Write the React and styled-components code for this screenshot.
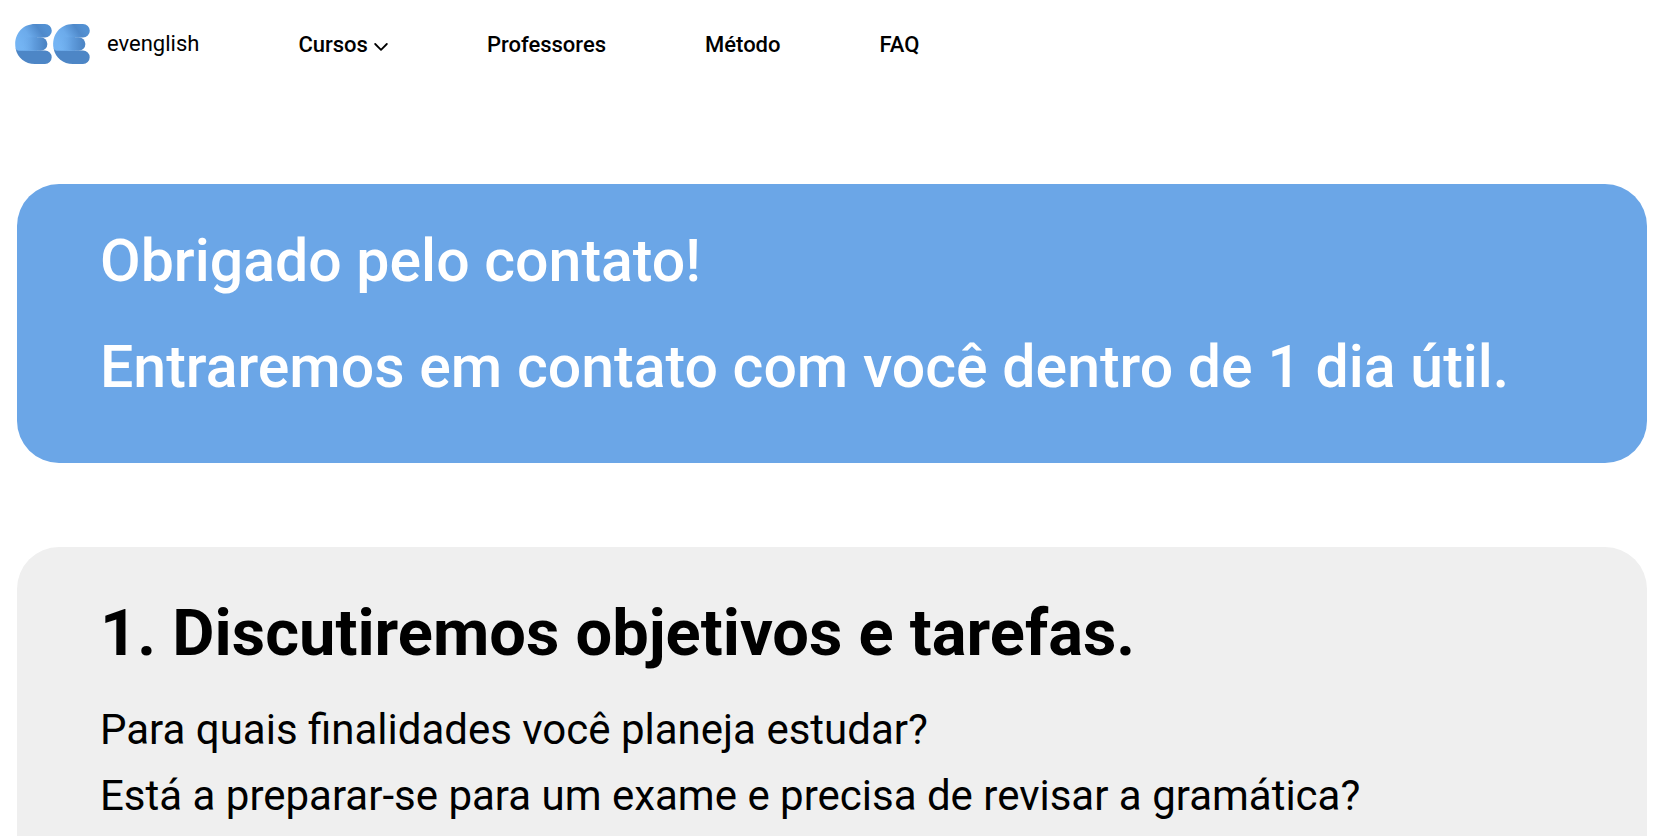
import React from 'react';
import styled, { createGlobalStyle } from 'styled-components';

const Colors = {
  BLACK: '#000',
  WHITE: '#fff',
  BLUE: '#6ba6e7',
  GREY: '#efefef',
};

const GlobalStyle = createGlobalStyle`
  body {
    background-color: ${Colors.WHITE};
    color: ${Colors.BLACK};
    font-family: Roboto, 'Liberation Sans', sans-serif;
    margin: 0;
  }
`;

const Header = styled.header`
  align-items: center;
  display: flex;
  gap: 99px;
  height: 88px;
  padding: 0 15px;
`;

const Brand = styled.a`
  align-items: center;
  color: ${Colors.BLACK};
  display: flex;
  font-size: 22px;
  gap: 17px;
  line-height: 26px;
  text-decoration: none;
`;

const Nav = styled.nav`
  align-items: center;
  display: flex;
  gap: 99px;
  padding-top: 2px;
`;

const NavLink = styled.a`
  color: ${Colors.BLACK};
  font-size: 22px;
  font-weight: 500;
  line-height: 26px;
  text-decoration: none;
`;

const NavButton = styled.button`
  align-items: center;
  background: none;
  border: 0;
  color: ${Colors.BLACK};
  cursor: pointer;
  display: flex;
  font-family: inherit;
  font-size: 22px;
  font-weight: 500;
  gap: 6px;
  line-height: 26px;
  padding: 0;
`;

const Main = styled.main`
  display: flex;
  flex-direction: column;
  gap: 84px;
  padding: 96px 33px 84px 17px;
`;

const Banner = styled.section`
  background-color: ${Colors.BLUE};
  border-radius: 42px;
  color: ${Colors.WHITE};
  padding: 24px 83px 43px;
`;

const BannerText = styled.p`
  font-size: 59px;
  font-weight: 500;
  line-height: 106px;
  margin: 0;
`;

const Step = styled.section`
  background-color: ${Colors.GREY};
  border-radius: 42px;
  padding: 48px 83px;
`;

const StepTitle = styled.h2`
  font-size: 65px;
  font-weight: 700;
  line-height: 76px;
  margin: 0 0 26px;
`;

const StepText = styled.p`
  font-size: 42px;
  line-height: 66px;
  margin: 0;
`;

const LogoLetter = () => (
  <>
    <path
      d="M0.6 24.5 C2.5 34 10 40 20 40 H30 A6.7 6.7 0 0 0 30 26.6 H18 Z"
      fill="#4d86c6"
    />
    <path
      d="M20 0 H30 A6.8 6.8 0 0 1 30 13.6 H22 V26.8 H5 Q1.5 26.8 0.6 24.5 C-1.8 11 7 0 20 0 Z"
      fill="url(#logo-top)"
    />
    <path
      d="M10 13.2 H25.6 A6.8 6.8 0 0 1 25.6 26.8 H6 Z"
      fill="url(#logo-middle)"
    />
  </>
);

const Logo = () => (
  <svg width="75" height="40" viewBox="0 0 75 40" aria-hidden="true">
    <defs>
      <linearGradient id="logo-top" x1="0.1" y1="0.7" x2="0.9" y2="0.3">
        <stop offset="0" stopColor="#74b4f3" />
        <stop offset="0.4" stopColor="#6cabeb" />
        <stop offset="0.8" stopColor="#4f89ca" />
        <stop offset="1" stopColor="#5290d2" />
      </linearGradient>
      <linearGradient id="logo-middle">
        <stop offset="0" stopColor="#74b4f3" stopOpacity="0" />
        <stop offset="0.5" stopColor="#5f9cdd" />
        <stop offset="0.9" stopColor="#4d86c6" />
      </linearGradient>
    </defs>
    <LogoLetter />
    <g transform="translate(38 0)">
      <LogoLetter />
    </g>
  </svg>
);

const Chevron = () => (
  <svg width="14" height="26" viewBox="0 0 14 26" fill="none" aria-hidden="true">
    <path
      d="M1.2 12 L7 17.8 L12.8 12"
      stroke="currentColor"
      strokeWidth="1.8"
      strokeLinecap="round"
      strokeLinejoin="round"
    />
  </svg>
);

const links = [
  { href: '#professores', label: 'Professores' },
  { href: '#metodo', label: 'Método' },
  { href: '#faq', label: 'FAQ' },
];

const App = () => (
  <>
    <GlobalStyle />
    <Header>
      <Brand href="/">
        <Logo />
        evenglish
      </Brand>
      <Nav>
        <NavButton type="button" aria-haspopup="true">
          Cursos
          <Chevron />
        </NavButton>
        {links.map(({ href, label }) => (
          <NavLink key={href} href={href}>
            {label}
          </NavLink>
        ))}
      </Nav>
    </Header>
    <Main>
      <Banner>
        <BannerText>Obrigado pelo contato!</BannerText>
        <BannerText>Entraremos em contato com você dentro de 1 dia útil.</BannerText>
      </Banner>
      <Step>
        <StepTitle>1. Discutiremos objetivos e tarefas.</StepTitle>
        <StepText>Para quais finalidades você planeja estudar?</StepText>
        <StepText>
          Está a preparar-se para um exame e precisa de revisar a gramática?
        </StepText>
      </Step>
    </Main>
  </>
);

export default App;
